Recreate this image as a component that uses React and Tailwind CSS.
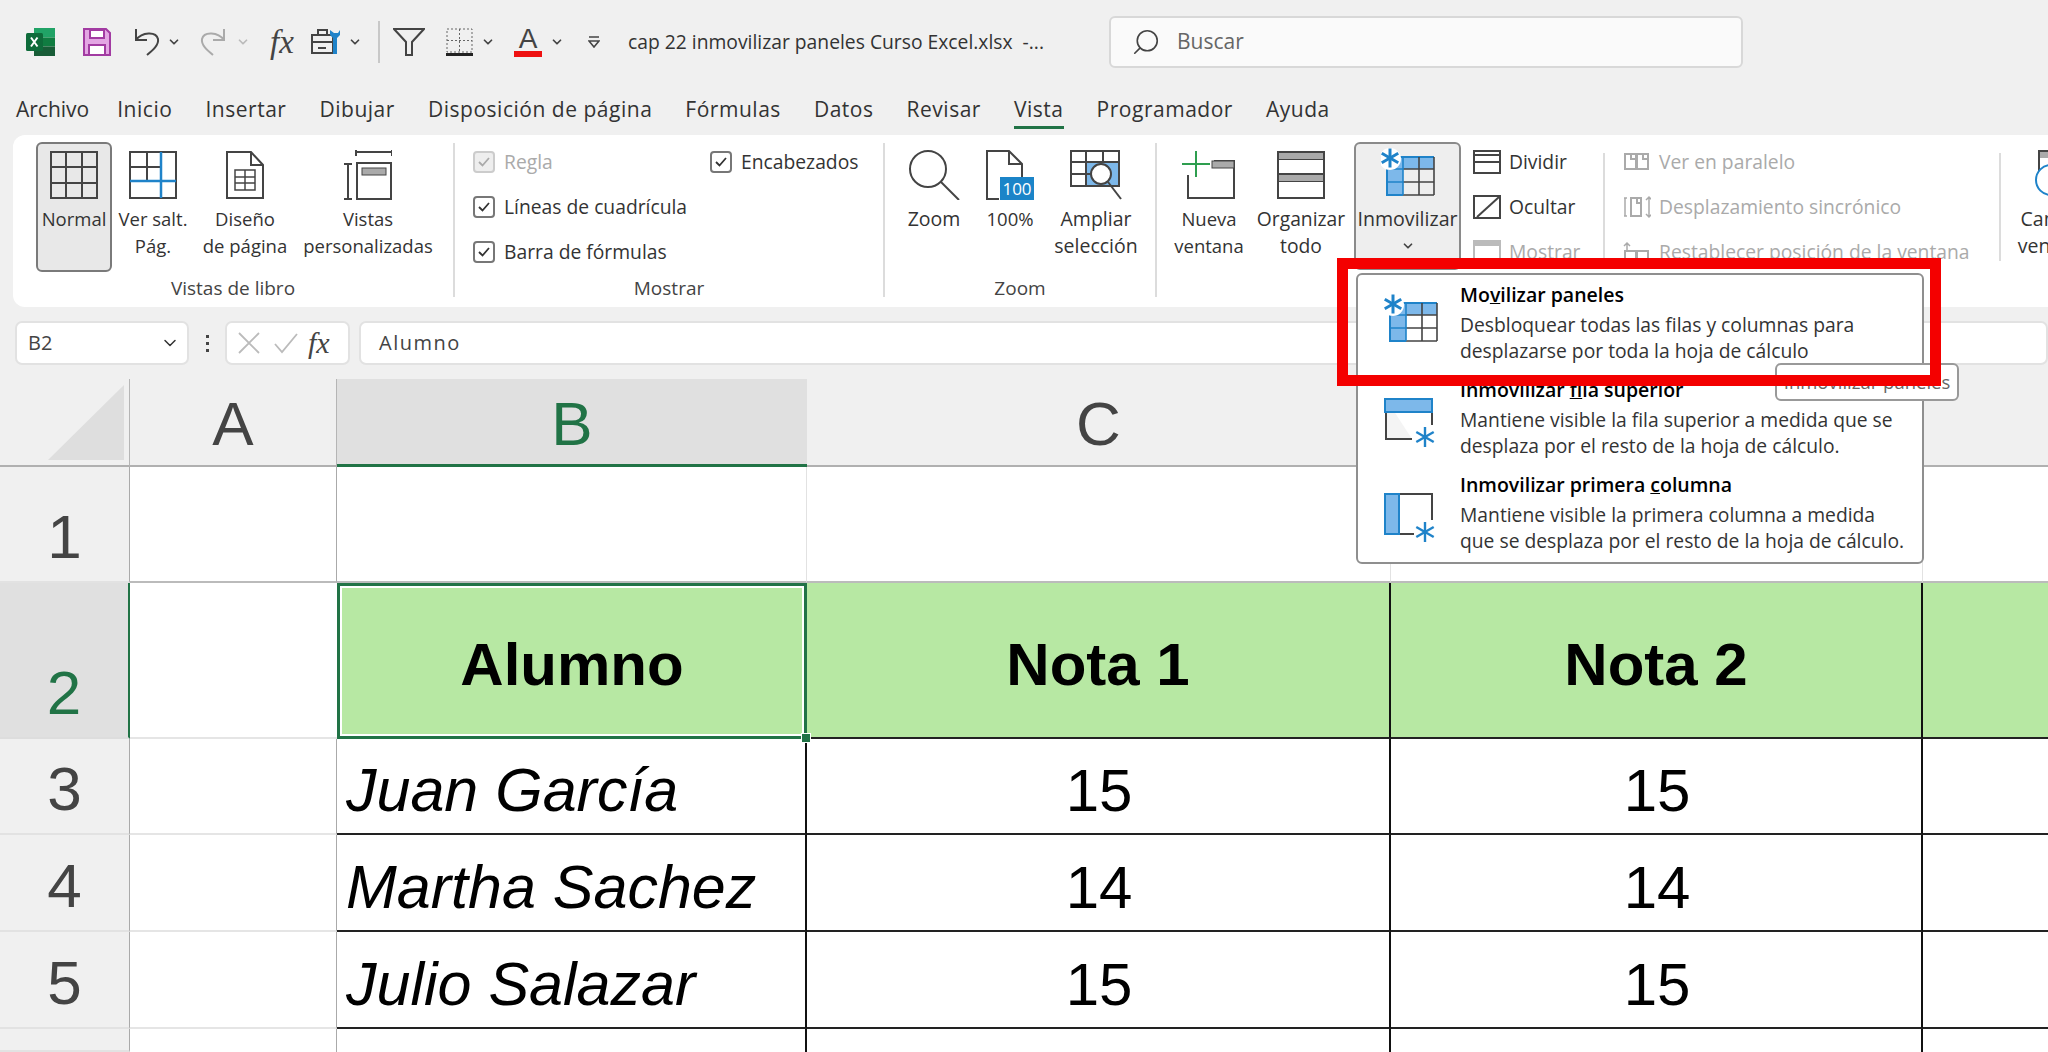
import { ChevronDown, Search } from "lucide-react";

const STEEL = "#444444";
const BLUE = "#1f83c9";
const LIGHT = "#7db8ea";

function Star({ x, y, r, w = 2.4 }) {
  const d = r * 0.87;
  const h = r * 0.5;
  return (
    <g stroke={BLUE} strokeWidth={w}>
      <line x1={x} y1={y - r} x2={x} y2={y + r} />
      <line x1={x - d} y1={y - h} x2={x + d} y2={y + h} />
      <line x1={x - d} y1={y + h} x2={x + d} y2={y - h} />
    </g>
  );
}

function ExcelIcon() {
  return (
    <svg width="30" height="28" viewBox="0 0 30 28">
      <rect x="8" y="0" width="21" height="9.5" fill="#21a366" />
      <rect x="8" y="9.5" width="21" height="9" fill="#107c41" />
      <rect x="8" y="18.5" width="21" height="9.5" fill="#185c37" />
      <rect x="0" y="5" width="17" height="18" rx="1.5" fill="#0e6b3a" />
      <path d="M5 9.5l6.5 9M11.5 9.5l-6.5 9" stroke="#fff" strokeWidth="2" />
    </svg>
  );
}

function SaveIcon() {
  return (
    <svg width="28" height="28" viewBox="0 0 28 28">
      <path d="M1 1h22l4 4v22H1z" fill="#e3a6e3" stroke="#a23ba2" strokeWidth="2" />
      <rect x="7" y="2" width="14" height="8" fill="#fff" stroke="#a23ba2" strokeWidth="2" />
      <rect x="6" y="17" width="16" height="10" fill="#fff" stroke="#a23ba2" strokeWidth="2" />
    </svg>
  );
}

function UndoIcon({ color, flip }) {
  return (
    <svg width="26" height="28" viewBox="0 0 26 28" className={flip ? "-scale-x-100" : ""}>
      <path d="M2 1v11h11" fill="none" stroke={color} strokeWidth="2" />
      <path d="M2 12C8 4 22 3 24 11c1 6-5 11-11 16" fill="none" stroke={color} strokeWidth="2" />
    </svg>
  );
}

function ToolsIcon() {
  return (
    <svg width="30" height="28" viewBox="0 0 30 28">
      <path d="M1 7h21v18H1zM7 7V2h9v5M1 14h21M7 20h8" fill="none" stroke={STEEL} strokeWidth="2" />
      <path d="M19 2v5l3 3v16h4V10l3-3V2l-2 3h-4z" fill={BLUE} />
    </svg>
  );
}

function FilterIcon() {
  return (
    <svg width="32" height="28" viewBox="0 0 32 28">
      <path d="M1 1h30L19 14v13h-6V14z" fill="none" stroke={STEEL} strokeWidth="2" />
    </svg>
  );
}

function BorderIcon() {
  return (
    <svg width="27" height="28" viewBox="0 0 27 28">
      <path d="M1 1h25v23H1zM13.5 1v23M1 12.5h25" fill="none" stroke="#666" strokeWidth="1" strokeDasharray="2 2" />
      <rect x="0" y="25" width="27" height="3" fill="#222" />
    </svg>
  );
}

function CellGrid({ w, h, cols, rows, stroke = STEEL }) {
  const lines = [];
  for (let i = 1; i < cols; i++) {
    const x = (w * i) / cols;
    lines.push(<line key={"c" + i} x1={x} y1="0" x2={x} y2={h} />);
  }
  for (let i = 1; i < rows; i++) {
    const y = (h * i) / rows;
    lines.push(<line key={"r" + i} x1="0" y1={y} x2={w} y2={y} />);
  }
  return (
    <svg width={w} height={h} viewBox={`0 0 ${w} ${h}`}>
      <g stroke={stroke} strokeWidth="2">{lines}</g>
      <rect x="1" y="1" width={w - 2} height={h - 2} fill="none" stroke={stroke} strokeWidth="2" />
    </svg>
  );
}

function PageBreakIcon() {
  return (
    <svg width="48" height="48" viewBox="0 0 48 48">
      <path d="M1 1h46v46H1zM1 16h32M18 1v29" fill="none" stroke={STEEL} strokeWidth="2" />
      <path d="M32 1v46M1 30h46" fill="none" stroke={BLUE} strokeWidth="2.5" />
    </svg>
  );
}

function PageLayoutIcon() {
  return (
    <svg width="38" height="48" viewBox="0 0 38 48">
      <path d="M1 1h24l12 13v33H1zM25 1v13h12" fill="none" stroke={STEEL} strokeWidth="2" />
      <path d="M9 19h20v20H9zM9 26h20M9 32h20M19 19v20" fill="none" stroke={STEEL} strokeWidth="1.5" />
    </svg>
  );
}

function CustomViewIcon() {
  return (
    <svg width="48" height="50" viewBox="0 0 48 50">
      <path d="M12 2h36M12 0v6M48 0v6M0 14h8M0 49h8M4 14v35" fill="none" stroke={STEEL} strokeWidth="2" />
      <path d="M13 13h34v36H13z" fill="#fff" stroke={STEEL} strokeWidth="2" />
      <rect x="18" y="18" width="24" height="7" fill="#aaaaaa" stroke={STEEL} strokeWidth="1" />
    </svg>
  );
}

function ZoomIcon() {
  return (
    <svg width="52" height="50" viewBox="0 0 52 50">
      <circle cx="20" cy="19" r="18" fill="none" stroke={STEEL} strokeWidth="2" />
      <line x1="33" y1="32" x2="51" y2="50" stroke={STEEL} strokeWidth="2" />
    </svg>
  );
}

function HundredIcon() {
  return (
    <div className="relative w-[48px] h-[50px]">
      <svg width="38" height="50" viewBox="0 0 38 50">
        <path d="M1 33V1h22l13 13v14M1 33v16h12M23 1v13h13" fill="none" stroke={STEEL} strokeWidth="2" />
      </svg>
      <span className="absolute right-0 bottom-0 w-[34px] h-[23px] bg-[#1b84c8] text-white text-[17px] leading-[23px] text-center">
        100
      </span>
    </div>
  );
}

function ZoomSelectionIcon() {
  return (
    <svg width="52" height="50" viewBox="0 0 52 50">
      <rect x="16" y="12" width="33" height="24" fill={LIGHT} />
      <path d="M1 1h48v35H1zM1 12h48M1 24h24M16 1v35M33 1v12" fill="none" stroke={STEEL} strokeWidth="2" />
      <circle cx="31" cy="24" r="10" fill="#fff" stroke={STEEL} strokeWidth="2" />
      <line x1="38" y1="32" x2="51" y2="49" stroke={STEEL} strokeWidth="2" />
    </svg>
  );
}

function NewWindowIcon() {
  return (
    <svg width="54" height="48" viewBox="0 0 54 48">
      <path d="M6 24v23h46V10H32" fill="none" stroke={STEEL} strokeWidth="2" />
      <rect x="30" y="10" width="22" height="7" fill="#aaaaaa" stroke={STEEL} strokeWidth="1" />
      <path d="M14 0v26M0 13h28" stroke="#2e9e4f" strokeWidth="2" fill="none" />
    </svg>
  );
}

function ArrangeIcon() {
  return (
    <svg width="48" height="48" viewBox="0 0 48 48">
      <path d="M1 1h46v46H1zM1 23h46M1 8h46M1 30h46" fill="none" stroke={STEEL} strokeWidth="2" />
      <rect x="2" y="2" width="44" height="6" fill="#aaaaaa" />
      <rect x="2" y="24" width="44" height="6" fill="#aaaaaa" />
    </svg>
  );
}

function FreezeIcon() {
  return (
    <svg width="54" height="48" viewBox="0 0 54 48">
      <rect x="6" y="9" width="47" height="12" fill={LIGHT} />
      <rect x="6" y="9" width="16" height="38" fill={LIGHT} />
      <path d="M6 9h47M6 9v38h16" fill="none" stroke={BLUE} strokeWidth="2" />
      <path d="M22 21h31M22 34h31M38 9v38M22 47h31M53 9v38" fill="none" stroke={STEEL} strokeWidth="1.6" />
      <path d="M6 21h16M6 34h16M22 9v38" fill="none" stroke={BLUE} strokeWidth="1.6" />
      <circle cx="9" cy="11" r="11" fill="#fff" />
      <Star x={9} y={10} r={9.5} w={3} />
    </svg>
  );
}

function FreezeRowIcon() {
  return (
    <svg width="54" height="50" viewBox="0 0 54 50">
      <path d="M2 1v40h26M48 1v26" fill="#f4f4f4" stroke={STEEL} strokeWidth="2" />
      <rect x="1" y="1" width="47" height="13" fill={LIGHT} stroke={BLUE} strokeWidth="2" />
      <Star x={41} y={39} r={10} />
    </svg>
  );
}

function FreezeColIcon() {
  return (
    <svg width="54" height="50" viewBox="0 0 54 50">
      <path d="M14 1h34v26M14 41h16" fill="none" stroke={STEEL} strokeWidth="2" />
      <rect x="1" y="1" width="14" height="40" fill={LIGHT} stroke={BLUE} strokeWidth="2" />
      <Star x={41} y={39} r={10} />
    </svg>
  );
}

function WinIcon({ kind, color = STEEL }) {
  return (
    <svg width="28" height="24" viewBox="0 0 28 24">
      <rect x="1" y="1" width="26" height="22" fill="none" stroke={color} strokeWidth="2" />
      {kind === "split" && <path d="M1 5h26M1 12h26" stroke={color} strokeWidth="2" />}
      {kind === "hide" && <path d="M4 22L26 2" stroke={color} strokeWidth="2" />}
      {kind === "show" && <rect x="2" y="2" width="24" height="4" fill={color} />}
    </svg>
  );
}

function TwinPages({ extra }) {
  return (
    <svg width="28" height="24" viewBox="0 0 28 24">
      {extra === "sync" && <path d="M1 3h3M1 21h3M2 3v18M26 2v20M23 5l3-3 3 3M23 19l3 3 3-3" fill="none" stroke="#aaa" strokeWidth="1.5" />}
      {extra === "sync" && <path d="M8 3h10v18H8zM14 3v5h4" fill="none" stroke="#aaa" strokeWidth="2" />}
      {extra === "reset" && <path d="M4 10V3M1 6l3-3 3 3" fill="none" stroke="#aaa" strokeWidth="1.5" />}
      {extra === "reset" && <path d="M2 11h11v11H2zM14 11h11v11H14z" fill="none" stroke="#aaa" strokeWidth="2" />}
      {!extra && <path d="M2 4h11v15H2zM14 4h11v15H14zM8 4v5h5M20 4v5h5" fill="none" stroke="#aaa" strokeWidth="2" />}
    </svg>
  );
}

function SwitchIcon() {
  return (
    <svg width="48" height="50" viewBox="0 0 48 50">
      <path d="M4 1h42v24H4z" fill="none" stroke={STEEL} strokeWidth="2" />
      <rect x="5" y="2" width="40" height="6" fill="#aaa" />
      <circle cx="16" cy="30" r="15" fill="#fff" stroke={BLUE} strokeWidth="2" />
    </svg>
  );
}

function Check({ disabled }) {
  return (
    <span
      className={`flex items-center justify-center w-[22px] h-[22px] rounded-[4px] border-2 ${
        disabled ? "border-[#cccccc] bg-[#eeeeee]" : "border-[#777777] bg-white"
      }`}
    >
      <svg width="14" height="12" viewBox="0 0 14 12">
        <path d="M2 6l3.5 3.5L12 2" fill="none" stroke={disabled ? "#aaaaaa" : "#333333"} strokeWidth="1.8" />
      </svg>
    </span>
  );
}

function CheckRow({ label, disabled }) {
  return (
    <div className="flex items-center gap-[9px] h-[45px] pb-[5px] text-[19.3px] whitespace-nowrap">
      <Check disabled={disabled} />
      <span className={disabled ? "text-[#aaaaaa]" : "text-[#333333]"}>{label}</span>
    </div>
  );
}

function BigButton({ icon, lines, top = "pt-[8px]", className = "" }) {
  return (
    <div className={`flex flex-col items-center shrink-0 ${top} ${className}`}>
      <div className="flex items-center justify-center h-[50px]">{icon}</div>
      <div className="mt-[5px] text-center leading-[27px] text-[#333333] whitespace-nowrap">
        {lines.map((l) => (
          <div key={l}>{l}</div>
        ))}
      </div>
    </div>
  );
}

function Group({ label, width, children }) {
  return (
    <div className="flex flex-col shrink-0 h-[162px]" style={{ width }}>
      <div className="flex h-[136px]">{children}</div>
      <div className="h-[26px] leading-[20px] text-center text-[19px] text-[#444444]">{label}</div>
    </div>
  );
}

function Sep() {
  return <div className="w-[2px] h-[154px] mt-[1px] bg-[#dcdcdc] shrink-0" />;
}

function SmallRow({ icon, label, color = "text-[#333333]" }) {
  return (
    <div className="flex items-center gap-[8px] h-[45px] pb-[5px] text-[19.3px] whitespace-nowrap">
      {icon}
      <span className={color}>{label}</span>
    </div>
  );
}

function TitleBar() {
  const chev = "text-[#444444] shrink-0";
  return (
    <div className="flex items-center h-[84px] pl-[26px]">
      <ExcelIcon />
      <div className="w-[27px]" />
      <SaveIcon />
      <div className="w-[23px]" />
      <UndoIcon color={STEEL} />
      <ChevronDown size={14} strokeWidth={3} className={`${chev} ml-[7px]`} />
      <div className="w-[19px]" />
      <UndoIcon color="#aaaaaa" flip />
      <ChevronDown size={14} strokeWidth={3} className="text-[#bbbbbb] ml-[10px]" />
      <span className="ml-[20px] w-[26px] font-['Liberation_Serif',serif] italic text-[33px] leading-none text-[#444444]">fx</span>
      <div className="w-[15px]" />
      <ToolsIcon />
      <ChevronDown size={14} strokeWidth={3} className={`${chev} ml-[7px]`} />
      <div className="w-[16px]" />
      <div className="w-[2px] h-[42px] bg-[#c8c8c8]" />
      <div className="w-[13px]" />
      <FilterIcon />
      <div className="w-[21px]" />
      <BorderIcon />
      <ChevronDown size={14} strokeWidth={3} className={`${chev} ml-[8px]`} />
      <div className="w-[19px]" />
      <div className="flex flex-col items-center w-[28px]">
        <span className="font-['Liberation_Sans',sans-serif] text-[28px] leading-[24px] text-[#444444]">A</span>
        <span className="w-full h-[6px] bg-[#ee1111]" />
      </div>
      <ChevronDown size={14} strokeWidth={3} className={`${chev} ml-[8px]`} />
      <svg width="12" height="12" viewBox="0 0 12 12" className="ml-[24px]">
        <path d="M1 1h10M1 5h10l-5 6z" fill="none" stroke="#444" strokeWidth="1.6" />
      </svg>
      <span className="ml-[28px] w-[424px] text-[19.3px] text-[#333333] whitespace-nowrap">
        cap 22 inmovilizar paneles Curso Excel.xlsx &nbsp;-...
      </span>
      <div className="ml-[57px] flex items-center w-[634px] h-[52px] bg-[#fafafa] border-2 border-[#d8d8d8] rounded-[6px] pl-[20px] gap-[16px] text-[21px] text-[#666666]">
        <Search size={30} strokeWidth={1.3} className="-scale-x-100 text-[#444444]" />
        Buscar
      </div>
    </div>
  );
}

function Tabs() {
  const tabs = ["Archivo", "Inicio", "Insertar", "Dibujar", "Disposición de página", "Fórmulas", "Datos", "Revisar", "Vista", "Programador", "Ayuda"];
  return (
    <div className="flex items-center h-[51px] pl-[16px] gap-[33px] text-[21px] tracking-[0.52px] text-[#333333] whitespace-nowrap">
      {tabs.map((t) => (
        <div key={t} className={`relative ${t === "Archivo" ? "-mr-[5px] tracking-normal" : ""}`}>
          {t}
          {t === "Vista" && <span className="absolute left-0 right-0 -bottom-[4px] h-[3px] bg-[#217346]" />}
        </div>
      ))}
    </div>
  );
}

function Ribbon() {
  return (
    <div className="flex h-[172px] ml-[13px] pt-[7px] bg-white rounded-l-[12px] text-[18.5px] overflow-hidden">
      <Group label="Vistas de libro" width={440}>
        <BigButton
          top="pt-[6px]"
          className="ml-[23px] w-[76px] h-[130px] bg-[#e8e8e8] border-2 border-[#7a7a7a] rounded-[6px]"
          icon={<CellGrid w={48} h={48} cols={3} rows={3} />}
          lines={["Normal"]}
        />
        <BigButton className="w-[82px]" icon={<PageBreakIcon />} lines={["Ver salt.", "Pág."]} />
        <BigButton className="w-[102px]" icon={<PageLayoutIcon />} lines={["Diseño", "de página"]} />
        <BigButton className="ml-[6px] w-[132px]" icon={<CustomViewIcon />} lines={["Vistas", "personalizadas"]} />
      </Group>
      <Sep />
      <Group label="Mostrar" width={428}>
        <div className="ml-[18px] w-[237px]">
          <CheckRow label="Regla" disabled />
          <CheckRow label="Líneas de cuadrícula" />
          <CheckRow label="Barra de fórmulas" />
        </div>
        <CheckRow label="Encabezados" />
      </Group>
      <Sep />
      <Group label="Zoom" width={270}>
        <BigButton className="ml-[19px] w-[60px] text-[19.5px]" icon={<ZoomIcon />} lines={["Zoom"]} />
        <BigButton className="ml-[16px] w-[60px]" icon={<HundredIcon />} lines={["100%"]} />
        <BigButton className="ml-[8px] w-[96px] text-[19.5px]" icon={<ZoomSelectionIcon />} lines={["Ampliar", "selección"]} />
      </Group>
      <Sep />
      <Group label="Ventana" width={842}>
        <BigButton className="ml-[12px] w-[80px]" icon={<NewWindowIcon />} lines={["Nueva", "ventana"]} />
        <BigButton className="ml-[5px] w-[94px] text-[19.3px]" icon={<ArrangeIcon />} lines={["Organizar", "todo"]} />
        <div className="ml-[6px] w-[107px] h-[128px] shrink-0 flex flex-col items-center pt-[4px] bg-[#eeeeee] border-2 border-[#8a8a8a] rounded-[6px]">
          <FreezeIcon />
          <div className="mt-[9px] leading-[27px] text-[19.6px] text-[#333333]">Inmovilizar</div>
          <ChevronDown size={14} strokeWidth={3} className="mt-[7px] text-[#444444]" />
        </div>
        <div className="ml-[12px] w-[130px]">
          <SmallRow icon={<WinIcon kind="split" />} label="Dividir" />
          <SmallRow icon={<WinIcon kind="hide" />} label="Ocultar" />
          <SmallRow icon={<WinIcon kind="show" color="#bbbbbb" />} label="Mostrar" color="text-[#aaaaaa]" />
        </div>
        <div className="w-[2px] h-[108px] mt-[11px] bg-[#dcdcdc] shrink-0" />
        <div className="ml-[18px]">
          <SmallRow icon={<TwinPages />} label="Ver en paralelo" color="text-[#aaaaaa]" />
          <SmallRow icon={<TwinPages extra="sync" />} label="Desplazamiento sincrónico" color="text-[#aaaaaa]" />
          <SmallRow icon={<TwinPages extra="reset" />} label="Restablecer posición de la ventana" color="text-[#aaaaaa]" />
        </div>
      </Group>
      <div className="w-[2px] h-[108px] mt-[11px] bg-[#dcdcdc] shrink-0" />
      <BigButton className="ml-[8px] w-[100px] text-[19.5px]" icon={<SwitchIcon />} lines={["Cambiar", "ventanas"]} />
    </div>
  );
}

function FormulaBar() {
  const box = "h-[44px] bg-white border-2 border-[#e2e2e2] rounded-[7px]";
  return (
    <div className="flex items-center h-[72px] pt-[14px] pb-[14px] pl-[15px] text-[20px] text-[#444444]">
      <div className={`${box} flex items-center justify-between w-[174px] pl-[11px] pr-[7px]`}>
        B2
        <ChevronDown size={20} strokeWidth={1.8} className="text-[#333333]" />
      </div>
      <div className="w-[36px] flex flex-col items-center gap-[4px]">
        <span className="w-[3px] h-[3px] bg-[#444444]" />
        <span className="w-[3px] h-[3px] bg-[#444444]" />
        <span className="w-[3px] h-[3px] bg-[#444444]" />
      </div>
      <div className={`${box} flex items-center w-[125px] pl-[10px]`}>
        <svg width="62" height="24" viewBox="0 0 62 24">
          <path d="M2 2l20 20M22 2L2 22M38 13l7 8L60 3" fill="none" stroke="#bbbbbb" strokeWidth="1.8" />
        </svg>
        <span className="ml-[9px] font-['Liberation_Serif',serif] italic text-[30px] leading-none text-[#444444]">fx</span>
      </div>
      <div className={`${box} flex items-center flex-1 ml-[9px] pl-[18px] tracking-[1.5px]`}>Alumno</div>
    </div>
  );
}

const CELL_FONT = "font-['Liberation_Sans',Arial,sans-serif]";

function ColHead({ children, active, border = "border-r border-[#b5b5b5]" }) {
  return (
    <div
      className={`flex items-center justify-center pt-[4px] text-[62px] leading-none border-b-2 ${CELL_FONT} ${
        active
          ? "bg-[#e0e0e0] text-[#217346] border-b-[3px] border-b-[#217346]"
          : `bg-[#f0f0f0] text-[#444444] border-b-[#b0b0b0] ${border}`
      }`}
    >
      {children}
    </div>
  );
}

function RowHead({ children, active }) {
  return (
    <div
      className={`flex items-end justify-center pb-[13px] text-[62px] leading-none ${CELL_FONT} ${
        active
          ? "bg-[#e0e0e0] text-[#217346] border-r-[2px] border-r-[#217346] border-b-2 border-b-[#dddddd]"
          : "bg-[#f0f0f0] text-[#444444] border-r border-r-[#aaaaaa] border-b-2 border-b-[#e2e2e2]"
      }`}
    >
      {children}
    </div>
  );
}

function Cell({ children, className = "" }) {
  return <div className={`bg-white ${className}`}>{children}</div>;
}

function DataRow({ num, name, a, b }) {
  const dataCell = "flex items-end justify-center pl-[2px] pb-[12px] text-[60px] leading-none text-black border-r-2 border-r-[#111111] border-b-2 border-b-[#222222]";
  return (
    <>
      <RowHead>{num}</RowHead>
      <Cell className="border-r border-r-[#aaaaaa] border-b-2 border-b-[#e5e5e5]" />
      <Cell className={`flex items-end pl-[9px] pb-[12px] italic text-[61px] leading-none text-black whitespace-nowrap border-r-2 border-r-[#111111] border-b-2 border-b-[#222222]`}>
        {name}
      </Cell>
      <Cell className={dataCell}>{a}</Cell>
      <Cell className={dataCell}>{b}</Cell>
      <Cell className="border-b-2 border-b-[#222222]" />
    </>
  );
}

function Sheet() {
  const green = "flex items-center justify-center pt-[10px] bg-[#b7e8a3] font-bold text-[60px] leading-none text-black border-r-2 border-r-[#111111] border-b-2 border-b-[#222222]";
  const blank = "border-r border-r-[#e2e2e2] border-b-2 border-b-[#bbbbbb]";
  return (
    <div className={`grid grid-cols-[130px_207px_470px_584px_532px_300px] grid-rows-[88px_116px_156px_96px_97px_97px_23px] ${CELL_FONT}`}>
      <div className="flex items-end justify-end pr-[5px] pb-[5px] bg-[#f0f0f0] border-r border-r-[#b5b5b5] border-b-2 border-b-[#b0b0b0]">
        <svg width="76" height="75" viewBox="0 0 76 75">
          <path d="M76 0v75H0z" fill="#dedede" />
        </svg>
      </div>
      <ColHead>A</ColHead>
      <ColHead active>B</ColHead>
      <ColHead>C</ColHead>
      <ColHead>D</ColHead>
      <ColHead border="">E</ColHead>

      <RowHead>1</RowHead>
      <Cell className="border-r border-r-[#aaaaaa] border-b-2 border-b-[#bbbbbb]" />
      <Cell className={blank} />
      <Cell className={blank} />
      <Cell className={blank} />
      <Cell className="border-b-2 border-b-[#bbbbbb]" />

      <RowHead active>2</RowHead>
      <Cell className="border-b-2 border-b-[#e5e5e5]" />
      <div className="relative flex items-center justify-center pt-[8px] bg-[#b7e8a3] font-bold text-[60px] leading-none text-black border-[3px] border-[#217346] shadow-[inset_0_0_0_2px_#ffffff]">
        Alumno
        <span className="absolute -right-[7px] -bottom-[7px] w-[10px] h-[10px] bg-[#217346] border border-white" />
      </div>
      <div className={green}>Nota 1</div>
      <div className={green}>Nota 2</div>
      <div className="bg-[#b7e8a3] border-b-2 border-b-[#222222]" />

      <DataRow num="3" name="Juan García" a="15" b="15" />
      <DataRow num="4" name="Martha Sachez" a="14" b="14" />
      <DataRow num="5" name="Julio Salazar" a="15" b="15" />

      <RowHead />
      <Cell className="border-r border-r-[#aaaaaa]" />
      <Cell className="border-r-2 border-r-[#111111]" />
      <Cell className="border-r-2 border-r-[#111111]" />
      <Cell className="border-r-2 border-r-[#111111]" />
      <Cell />
    </div>
  );
}

function MenuItem({ icon, iconTop, title, lines }) {
  return (
    <div className="flex h-[95px] pl-[26px]">
      <div className="w-[76px] shrink-0" style={{ paddingTop: iconTop }}>{icon}</div>
      <div className="pt-[7px] leading-[26px] whitespace-nowrap">
        <div className="mb-[4px] text-[19.5px] font-semibold text-black">{title}</div>
        {lines.map((l) => (
          <div key={l} className="text-[#333333]">{l}</div>
        ))}
      </div>
    </div>
  );
}

function FreezeMenu() {
  return (
    <div className="absolute left-[1356px] top-[273px] w-[568px] h-[291px] bg-white border-2 border-[#8f8f8f] rounded-[6px] text-[19.3px]">
      <MenuItem
        icon={<FreezeIcon />}
        iconTop={19}
        title={<>Mo<u>v</u>ilizar paneles</>}
        lines={["Desbloquear todas las filas y columnas para", "desplazarse por toda la hoja de cálculo"]}
      />
      <MenuItem
        icon={<FreezeRowIcon />}
        iconTop={28}
        title={<>Inmovilizar <u>f</u>ila superior</>}
        lines={["Mantiene visible la fila superior a medida que se", "desplaza por el resto de la hoja de cálculo."]}
      />
      <MenuItem
        icon={<FreezeColIcon />}
        iconTop={28}
        title={<>Inmovilizar primera <u>c</u>olumna</>}
        lines={["Mantiene visible la primera columna a medida", "que se desplaza por el resto de la hoja de cálculo."]}
      />
    </div>
  );
}

export default function App() {
  return (
    <div className="relative w-[2048px] h-[1052px] overflow-hidden bg-[#f0f0f0] font-['Open_Sans',sans-serif]">
      <TitleBar />
      <Tabs />
      <Ribbon />
      <FormulaBar />
      <Sheet />
      <FreezeMenu />
      <div className="absolute left-[1775px] top-[363px] w-[184px] h-[38px] flex items-center justify-center bg-white border-2 border-[#999999] rounded-[6px] text-[18.5px] text-[#666666] whitespace-nowrap">
        Inmovilizar paneles
      </div>
      <div className="absolute left-[1337px] top-[258px] w-[604px] h-[128px] border-[11px] border-[#f40000]" />
    </div>
  );
}
